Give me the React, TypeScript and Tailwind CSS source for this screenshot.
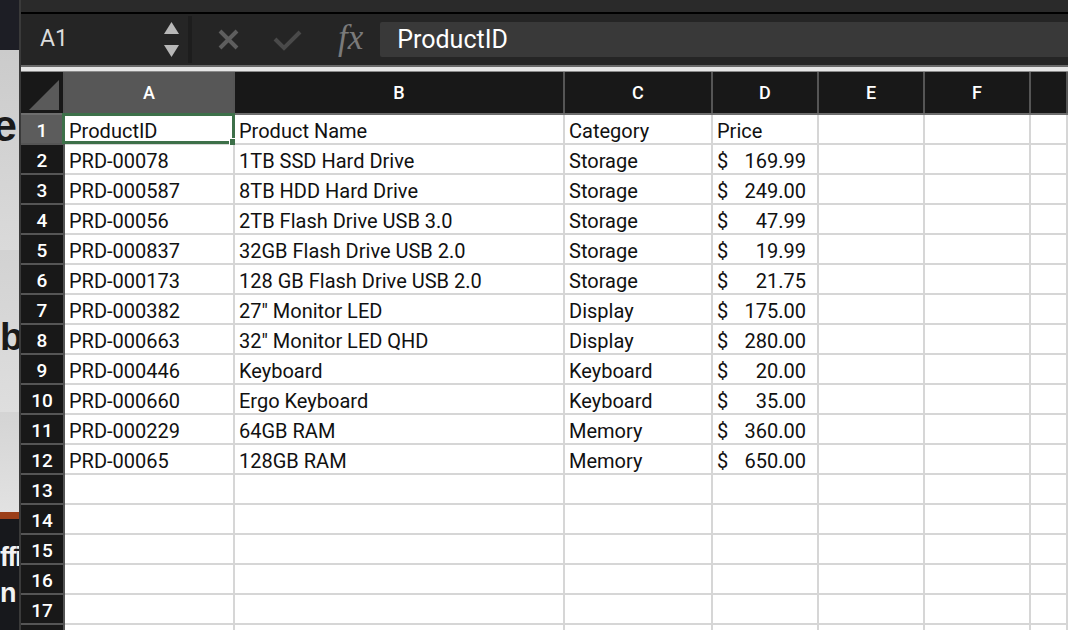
import React from 'react';

const rows: string[][] = [
  ['ProductID', 'Product Name', 'Category', 'Price'],
  ['PRD-00078', '1TB SSD Hard Drive', 'Storage', '169.99'],
  ['PRD-000587', '8TB HDD Hard Drive', 'Storage', '249.00'],
  ['PRD-00056', '2TB Flash Drive USB 3.0', 'Storage', '47.99'],
  ['PRD-000837', '32GB Flash Drive USB 2.0', 'Storage', '19.99'],
  ['PRD-000173', '128 GB Flash Drive USB 2.0', 'Storage', '21.75'],
  ['PRD-000382', '27" Monitor LED', 'Display', '175.00'],
  ['PRD-000663', '32" Monitor LED QHD', 'Display', '280.00'],
  ['PRD-000446', 'Keyboard', 'Keyboard', '20.00'],
  ['PRD-000660', 'Ergo Keyboard', 'Keyboard', '35.00'],
  ['PRD-000229', '64GB RAM', 'Memory', '360.00'],
  ['PRD-00065', '128GB RAM', 'Memory', '650.00'],
];

const columns = ['A', 'B', 'C', 'D', 'E', 'F', ''];
const gridCols = 'grid grid-cols-[44px_170px_330px_148px_106px_106px_106px_1fr] grid-rows-[100%] shrink-0';
const cellText = "font-['Roboto',sans-serif] text-[20px] leading-[24px] text-[#111]";

const LeftStrip: React.FC = () => (
  <div className="w-[19px] h-[630px] flex flex-col overflow-hidden shrink-0">
    <div className="h-[50px] bg-[#1d1e25] shrink-0" />
    <div className="h-[200px] bg-gradient-to-b from-[#cbcbcb] to-[#dadada] overflow-hidden shrink-0">
      <div className="mt-[54px] flex justify-end pr-[2px] whitespace-nowrap font-['Liberation_Sans',sans-serif] font-bold text-[44px] leading-[44px] text-[#1a1a1a]">
        e
      </div>
    </div>
    <div className="h-[162px] bg-gradient-to-b from-[#d2d2d2] to-[#dedede] overflow-hidden shrink-0">
      <div className="mt-[68px] whitespace-nowrap font-['Liberation_Sans',sans-serif] font-bold text-[38px] leading-[38px] text-[#1a1a1a]">
        ble
      </div>
    </div>
    <div className="h-[100px] bg-gradient-to-b from-[#d4d4d4] to-[#e2e2e2] shrink-0" />
    <div className="h-[7px] bg-[#9b3f19] shrink-0" />
    <div className="flex-1 bg-[#17181c] overflow-hidden">
      <div className="mt-[24px] whitespace-nowrap font-['Liberation_Sans',sans-serif] font-bold text-[27px] leading-[28px] tracking-[-1.5px] text-[#f2f2f2]">
        ffic
      </div>
      <div className="mt-[8px] whitespace-nowrap font-['Liberation_Sans',sans-serif] font-bold text-[27px] leading-[28px] text-[#f2f2f2]">
        n e
      </div>
    </div>
  </div>
);

const FormulaBar: React.FC = () => (
  <div className="h-[51px] bg-[#252525] flex items-stretch shrink-0">
    <div className="w-[167px] flex items-center pl-[19px] pr-[10px] justify-between">
      <span className="font-['Roboto',sans-serif] text-[23px] text-[#dcdcdc]">A1</span>
      <div className="flex flex-col items-center gap-[11px] mr-[-1px]">
        <svg width="15" height="12" viewBox="0 0 15 12">
          <path d="M7.5 0 L15 12 L0 12 Z" fill="#b8b8b8" />
        </svg>
        <svg width="15" height="12" viewBox="0 0 15 12">
          <path d="M0 0 L15 0 L7.5 12 Z" fill="#b8b8b8" />
        </svg>
      </div>
    </div>
    <div className="w-[4px] my-[2px] bg-[#1d1d1d]" />
    <div className="flex items-center pl-[26px] gap-[34px]">
      <svg width="21" height="21" viewBox="0 0 21 21">
        <path d="M2 2 L19 19 M19 2 L2 19" stroke="#5e5e5e" strokeWidth="4" />
      </svg>
      <svg width="29" height="22" viewBox="0 0 29 22">
        <path d="M2 10 L11 19 L27 3" stroke="#4a4a4a" strokeWidth="4" fill="none" />
      </svg>
      <span className="font-['Liberation_Serif',serif] italic text-[35px] leading-none text-[#7a7a7a] mb-[4px] ml-[2px]">
        fx
      </span>
    </div>
    <div className="flex-1 ml-[17px] my-[8px] bg-[#393939] flex items-center pl-[17px] rounded-l-[2px]">
      <span className="font-['Roboto',sans-serif] text-[25px] text-white">ProductID</span>
    </div>
  </div>
);

const Header: React.FC = () => (
  <div className={`${gridCols} h-[43px] bg-[#181818] border-b-2 border-[#6e6e6e]`}>
    <div className="border-r-2 border-[#555] flex items-end justify-end pr-[4px] pb-[3px]">
      <svg width="30" height="30" viewBox="0 0 30 30">
        <path d="M0 30 L30 30 L30 0 Z" fill="#5a5a5a" />
      </svg>
    </div>
    {columns.map((c, i) => (
      <div
        key={i}
        className={`flex items-center justify-center border-r-2 border-[#555] font-['Roboto',sans-serif] font-medium text-[18px] text-white ${
          i === 0 ? 'bg-[#575757]' : ''
        }`}
      >
        {c}
      </div>
    ))}
  </div>
);

const Row: React.FC<{ n: number; data?: string[] }> = ({ n, data }) => {
  const cells = data ?? ['', '', '', ''];
  return (
    <div className={`${gridCols} h-[30px]`}>
      <div
        className={`flex items-center justify-center pt-[4px] border-r-2 border-b-2 border-[#555] font-['Roboto',sans-serif] font-medium text-[19px] leading-[22px] text-white ${
          n === 1 ? 'bg-[#5c5c5c]' : 'bg-[#181818]'
        }`}
      >
        {n}
      </div>
      {[0, 1, 2, 3, 4, 5, 6].map((ci) => {
        const value = cells[ci] ?? '';
        const isPrice = ci === 3 && n > 1 && value !== '';
        return (
          <div
            key={ci}
            className={`relative bg-white border-r-2 border-b-2 border-[#d6d6d6] flex items-center pt-[4px] pl-[4px] whitespace-nowrap ${cellText}`}
          >
            {isPrice ? (
              <div className="flex w-full justify-between pr-[11px]">
                <span>$</span>
                <span>{value}</span>
              </div>
            ) : (
              value
            )}
            {n === 1 && ci === 0 && (
              <div className="absolute left-[-3px] top-[-2px] right-[-2px] bottom-[-1px] border-[3px] border-[#3d7049]">
                <div className="absolute right-[-7px] bottom-[-7px] w-[10px] h-[10px] bg-[#3d7049] border border-white" />
              </div>
            )}
          </div>
        );
      })}
    </div>
  );
};

const App: React.FC = () => {
  return (
    <div className="w-[1068px] h-[630px] overflow-hidden flex bg-[#181818]">
      <LeftStrip />
      <div className="w-[2px] bg-[#3a3a3a] shrink-0" />
      <div className="flex-1 flex flex-col overflow-hidden">
        <div className="h-[12px] bg-[#2a2a2a] shrink-0" />
        <div className="h-[2px] bg-black shrink-0" />
        <FormulaBar />
        <div className="h-[2px] bg-[#6a6a6a] shrink-0" />
        <div className="h-[4px] bg-[#e6e6e6] shrink-0" />
        <div className="h-[1px] bg-[#8a8a8a] shrink-0" />
        <Header />
        {Array.from({ length: 18 }, (_, i) => (
          <Row key={i} n={i + 1} data={rows[i]} />
        ))}
      </div>
    </div>
  );
};

export default App;
